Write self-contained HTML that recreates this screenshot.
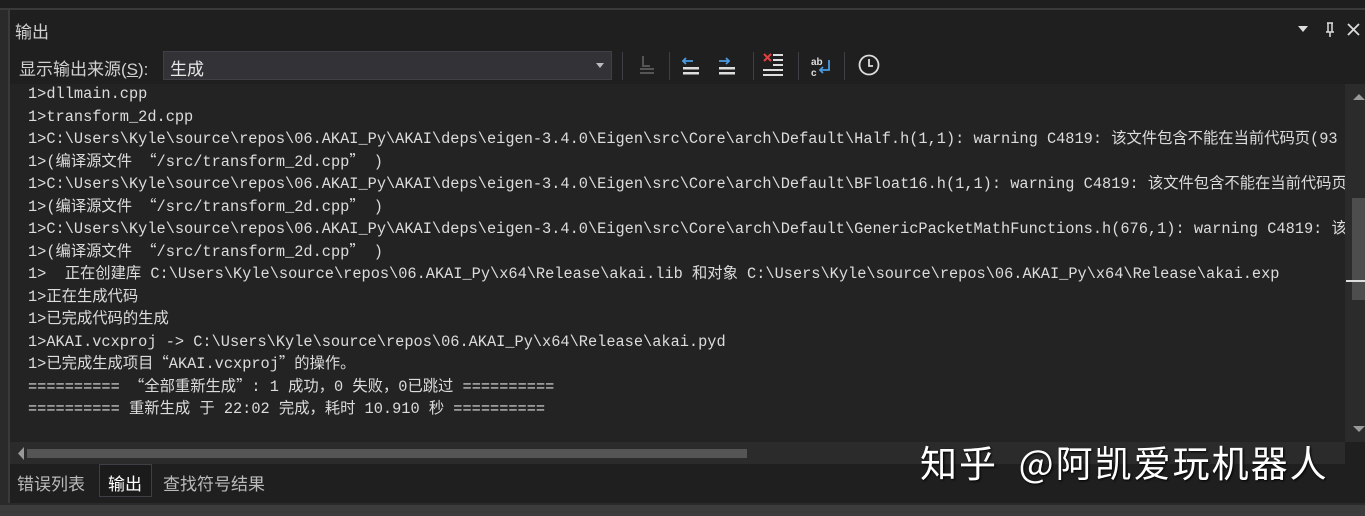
<!DOCTYPE html>
<html><head><meta charset="utf-8"><style>
*{margin:0;padding:0;box-sizing:border-box}
html,body{width:1365px;height:516px;overflow:hidden}
body{background:#2a2a2a;position:relative;font-family:"Liberation Sans","Noto Sans CJK SC",sans-serif;color:#d4d4d4}
.abs{position:absolute}
#top{left:0;top:0;width:1365px;height:10px;background:#1e1e1e;border-bottom:2px solid #3a3a3a}
#panel{left:8px;top:10px;width:1357px;height:493px;background:#1f1f1f;border-left:2px solid #3a3a3a}
.t{font-size:17px;color:#d0d0d0;white-space:nowrap}
#combo{left:163px;top:51px;width:449px;height:29px;background:#333337;border:1px solid #3f3f46}
#out{left:10px;top:84px;width:1335px;height:358px;background:#232323}
#log{position:absolute;left:28px;top:83px;width:1317px;height:358px;overflow:hidden;font-family:"Liberation Mono","Noto Sans CJK SC",monospace;font-size:15.3px;color:#dcdcdc}
#log div{height:22.5px;line-height:22.5px;white-space:pre;overflow:visible}
.q{font-family:"Noto Sans CJK SC",sans-serif;line-height:0}
.sep{width:1px;height:28px;background:#3f3f46;top:52px}
#bottom{left:0;top:505px;width:1365px;height:11px;background:#3c3c3c}
</style></head><body>
<div class="abs" id="top"></div>
<div class="abs" id="panel"></div>
<div class="abs t" style="left:15px;top:18px">输出</div>
<svg class="abs" style="left:1296px;top:22px" width="69" height="16"><path d="M2 4h10l-5 6z" fill="#ddd"/><path d="M31 1h6M32 1v9M36 1v9M30 10h8M34 10v5" stroke="#ddd" stroke-width="1.5" fill="none"/><path d="M52 2l11 11M63 2L52 13" stroke="#ddd" stroke-width="1.8"/></svg>
<div class="abs t" style="left:19px;top:55px">显示输出来源(<u>S</u>):</div>
<div class="abs" id="combo"></div>
<div class="abs t" style="left:170px;top:55px;color:#e6e6e6">生成</div>
<svg class="abs" style="left:596px;top:62px" width="10" height="8"><path d="M0 1h8l-4 5z" fill="#bbb"/></svg>
<div class="abs sep" style="left:622px"></div>
<div class="abs sep" style="left:669px"></div>
<div class="abs sep" style="left:753px"></div>
<div class="abs sep" style="left:798px"></div>
<div class="abs sep" style="left:844px"></div>
<svg class="abs" style="left:630px;top:52px" width="260" height="28">
<g stroke="#555" stroke-width="2" fill="none"><path d="M13 4v10h7M10 17h14M10 21h14"/></g>
<g stroke="#4a9be0" stroke-width="1.8" fill="none"><path d="M53 9h10M56 6l-3 3 3 3"/><path d="M89 9h10M96 6l3 3-3 3"/></g>
<g fill="#ddd"><rect x="53" y="15" width="16" height="2.5"/><rect x="53" y="20" width="16" height="2.5"/><rect x="89" y="15" width="16" height="2.5"/><rect x="89" y="20" width="16" height="2.5"/></g>
<path d="M134 2l7 7M141 2l-7 7" stroke="#e04040" stroke-width="2"/>
<g fill="#ddd"><rect x="143" y="2" width="10" height="2"/><rect x="143" y="7" width="10" height="2"/><rect x="143" y="12" width="10" height="2"/><rect x="133" y="17" width="20" height="2"/><rect x="133" y="22" width="20" height="2"/></g>
<text x="181" y="13" font-family="Liberation Sans" font-size="10" font-weight="bold" fill="#ddd">ab</text>
<text x="181" y="24" font-family="Liberation Sans" font-size="10" font-weight="bold" fill="#ddd">c</text>
<path d="M199 8v10h-9M193 15l-3 3 3 3" stroke="#4a9be0" stroke-width="1.8" fill="none"/>
<circle cx="239" cy="13" r="9.5" stroke="#ddd" stroke-width="1.8" fill="none"/><path d="M239 7v7h4" stroke="#ddd" stroke-width="1.8" fill="none"/>
</svg>
<div class="abs" id="out"></div>
<div id="log"><div>1>dllmain.cpp</div><div>1>transform_2d.cpp</div><div>1>C:\Users\Kyle\source\repos\06.AKAI_Py\AKAI\deps\eigen-3.4.0\Eigen\src\Core\arch\Default\Half.h(1,1): warning C4819: 该文件包含不能在当前代码页(93</div><div>1>(编译源文件 <span class="q">“</span>/src/transform_2d.cpp<span class="q">”</span> )</div><div>1>C:\Users\Kyle\source\repos\06.AKAI_Py\AKAI\deps\eigen-3.4.0\Eigen\src\Core\arch\Default\BFloat16.h(1,1): warning C4819: 该文件包含不能在当前代码页</div><div>1>(编译源文件 <span class="q">“</span>/src/transform_2d.cpp<span class="q">”</span> )</div><div>1>C:\Users\Kyle\source\repos\06.AKAI_Py\AKAI\deps\eigen-3.4.0\Eigen\src\Core\arch\Default\GenericPacketMathFunctions.h(676,1): warning C4819: 该文件</div><div>1>(编译源文件 <span class="q">“</span>/src/transform_2d.cpp<span class="q">”</span> )</div><div>1>  正在创建库 C:\Users\Kyle\source\repos\06.AKAI_Py\x64\Release\akai.lib 和对象 C:\Users\Kyle\source\repos\06.AKAI_Py\x64\Release\akai.exp</div><div>1>正在生成代码</div><div>1>已完成代码的生成</div><div>1>AKAI.vcxproj -> C:\Users\Kyle\source\repos\06.AKAI_Py\x64\Release\akai.pyd</div><div>1>已完成生成项目<span class="q">“</span>AKAI.vcxproj<span class="q">”</span>的操作。</div><div>========== <span class="q">“</span>全部重新生成<span class="q">”</span>: 1 成功，0 失败，0已跳过 ==========</div><div>========== 重新生成 于 22:02 完成，耗时 10.910 秒 ==========</div></div>
<div class="abs" style="left:1345px;top:84px;width:20px;height:358px;background:#2b2b2b"></div>
<div class="abs" style="left:1352px;top:198px;width:13px;height:102px;background:#4d4d4d"></div>
<div class="abs" style="left:1346px;top:280px;width:19px;height:2px;background:#ddd"></div>
<svg class="abs" style="left:1353px;top:92px" width="12" height="345"><path d="M0 8l6-6 6 6z" fill="#999"/><path d="M0 334l6 6 6-6z" fill="#999"/></svg>
<div class="abs" style="left:10px;top:442px;width:1335px;height:22px;background:#2b2b2b"></div>
<div class="abs" style="left:27px;top:449px;width:720px;height:9px;background:#555"></div>
<svg class="abs" style="left:17px;top:447px" width="10" height="14"><path d="M7 0v13L1 6.5z" fill="#999"/></svg>
<div class="abs" style="left:99px;top:464px;width:53px;height:33px;background:#1b1b1b;border:1px solid #3f3f46"></div>
<div class="abs t" style="left:17px;top:470px;color:#bbb">错误列表</div>
<div class="abs t" style="left:108px;top:470px;color:#fff">输出</div>
<div class="abs t" style="left:163px;top:470px;color:#bbb">查找符号结果</div>
<div class="abs" style="left:920px;top:434px;font-size:37px;letter-spacing:2px;color:#fff;white-space:nowrap;text-shadow:1px 1px 2px #000;font-family:'Noto Sans CJK SC',sans-serif">知乎&nbsp;&nbsp;@阿凯爱玩机器人</div>
<div class="abs" id="bottom"></div>
</body></html>
